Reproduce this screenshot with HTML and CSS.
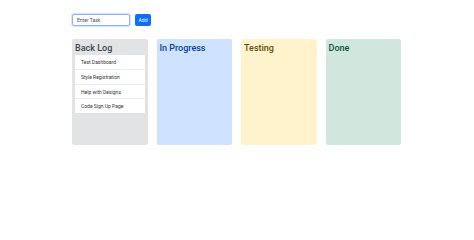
FILE: index.html
```html
<!DOCTYPE html>
<html>
<head>
<meta charset="utf-8">
<link rel="stylesheet" href="styles.css">
</head>
<body>
<div class="app">
  <form class="task-form">
    <input class="task-input" type="text" placeholder="Enter Task">
    <button class="add-btn" type="button">Add</button>
  </form>
  <div class="board">
    <div class="column backlog">
      <h2 class="col-title">Back Log</h2>
      <ul class="task-list">
        <li class="task">Test Dashboard</li>
        <li class="task">Style Registration</li>
        <li class="task">Help with Designs</li>
        <li class="task">Code Sign Up Page</li>
      </ul>
    </div>
    <div class="column progress">
      <h2 class="col-title">In Progress</h2>
    </div>
    <div class="column testing">
      <h2 class="col-title">Testing</h2>
    </div>
    <div class="column done">
      <h2 class="col-title">Done</h2>
    </div>
  </div>
</div>
</body>
</html>
```
FILE: styles.css
```css
* { box-sizing: border-box; }
html, body { margin: 0; padding: 0; background: #fff; }
body { font-family: Roboto, "Liberation Sans", Arial, sans-serif; color: #212529; }
.app { padding: 14px 0 0 72px; }
.task-form { display: flex; gap: 5px; align-items: center; margin: 0; }
.task-input {
  width: 58px; height: 12px; padding: 0 4px;
  border: 1px solid #86b7fe; border-radius: 2px;
  box-shadow: 0 0 0 1px rgba(13,110,253,.18);
  font-family: Roboto, "Liberation Sans", Arial, sans-serif; font-size: 5px; color: #212529;
  outline: none;
}
.task-input::placeholder { color: #495057; }
.add-btn {
  width: 16px; height: 12px; padding: 0;
  background: #0d6efd; color: #fff; border: none; border-radius: 2px;
  font-family: Roboto, "Liberation Sans", Arial, sans-serif; font-size: 5px;
}
.board { display: flex; gap: 9px; margin-top: 13px; }
.column { width: 75.5px; height: 106px; border-radius: 2px; padding: 2.5px 3px 3px; }
.col-title { margin: 0; font-size: 9px; line-height: 13px; font-weight: 500; }
.backlog { background: #e2e3e5; }
.backlog .col-title { color: #41464b; }
.progress { background: #cfe2ff; }
.progress .col-title { color: #084298; }
.testing { background: #fff3cd; }
.testing .col-title { color: #664d03; }
.done { background: #d1e7dd; }
.done .col-title { color: #0f5132; }
.task-list { list-style: none; margin: 0; padding: 0; background: #fff; border-radius: 1px; }
.task {
  height: 14.5px; line-height: 14.5px; padding: 0 6px;
  font-size: 5px; color: #333;
  border-top: 1px solid #eee;
}
.task:first-child { border-top: none; }
```
